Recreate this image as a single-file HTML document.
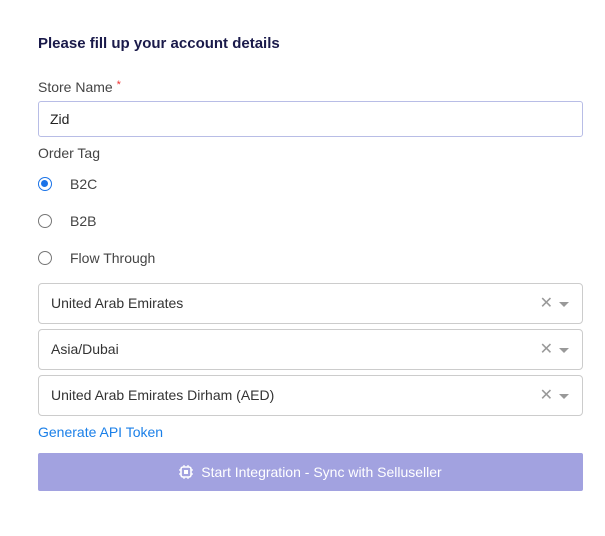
<!DOCTYPE html>
<html><head><style>
*{box-sizing:border-box;margin:0;padding:0}
body{width:605px;height:536px;background:#fff;font-family:"Liberation Sans",sans-serif;color:#333;position:relative;overflow:hidden}
.a{position:absolute}
h1{position:absolute;left:38px;top:35px;font-size:15px;font-weight:bold;color:#1a1a4a}
.lbl{font-size:14px;color:#444}
.inp{left:38px;top:101px;width:545px;height:36px;border:1px solid #b8bde6;border-radius:3px;padding-left:11px;line-height:34px;font-size:14px;color:#222}
.r{left:38px;width:14px;height:14px;border:1px solid #777;border-radius:50%}
.r.on{border:1.5px solid #1a73e8}
.r.on:after{content:"";position:absolute;left:2px;top:2px;width:7px;height:7px;border-radius:50%;background:#1a73e8}
.rl{left:70px;font-size:14px;color:#444}
.sel{left:38px;width:545px;height:41px;border:1px solid #ccc;border-radius:4px;padding-left:12px;line-height:39px;font-size:14px;color:#333}
.sel .x{position:absolute;right:29px;top:0;color:#999;font-size:16px}
.sel .c{position:absolute;right:13px;top:18px;border-left:5px solid transparent;border-right:5px solid transparent;border-top:5px solid #999}
.btn{left:38px;top:453px;width:545px;height:38px;background:#a2a2e0;border-radius:2px;color:#fff;font-size:14px;text-align:center;line-height:38px}
</style></head><body>
<h1>Please fill up your account details</h1>
<div class="a lbl" style="left:38px;top:79px">Store Name <span style="color:#e33;font-size:11px;vertical-align:top">*</span></div>
<div class="a inp">Zid</div>
<div class="a lbl" style="left:38px;top:145px">Order Tag</div>
<div class="a r on" style="top:177px"></div><div class="a rl" style="top:176px">B2C</div>
<div class="a r" style="top:214px"></div><div class="a rl" style="top:213px">B2B</div>
<div class="a r" style="top:251px"></div><div class="a rl" style="top:250px">Flow Through</div>
<div class="a sel" style="top:283px">United Arab Emirates<span class="x">✕</span><span class="c"></span></div>
<div class="a sel" style="top:329px">Asia/Dubai<span class="x">✕</span><span class="c"></span></div>
<div class="a sel" style="top:375px">United Arab Emirates Dirham (AED)<span class="x">✕</span><span class="c"></span></div>
<div class="a" style="left:38px;top:424px;font-size:14px;color:#1a7fe8">Generate API Token</div>
<div class="a btn"><svg width="14" height="14" viewBox="0 0 14 14" style="vertical-align:-2px;margin-right:8px"><rect x="2" y="2" width="10" height="10" rx="2" fill="none" stroke="#fff" stroke-width="1.6"/><rect x="5" y="5" width="4" height="4" fill="#fff"/><path d="M5 0v2M9 0v2M5 12v2M9 12v2M0 5h2M0 9h2M12 5h2M12 9h2" stroke="#fff" stroke-width="1.2"/></svg>Start Integration - Sync with Selluseller</div>
</body></html>
